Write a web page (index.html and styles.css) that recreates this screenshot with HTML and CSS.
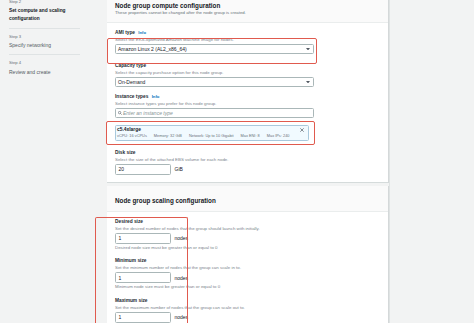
FILE: index.html
```html
<!DOCTYPE html>
<html lang="en">
<head>
<meta charset="utf-8">
<title>Node group configuration</title>
<link rel="stylesheet" href="styles.css">
</head>
<body>
<div class="page">
  <nav class="steps">
    <div class="step first">
      <div class="step-num">Step 2</div>
      <div class="step-title current">Set compute and scaling configuration</div>
    </div>
    <div class="step">
      <div class="step-num">Step 3</div>
      <div class="step-title">Specify networking</div>
    </div>
    <div class="step last">
      <div class="step-num">Step 4</div>
      <div class="step-title">Review and create</div>
    </div>
  </nav>

  <main class="main">
    <section class="card">
      <header class="card-head">
        <h2>Node group compute configuration</h2>
        <p>These properties cannot be changed after the node group is created.</p>
      </header>
      <div class="card-body first-body">
        <div class="field">
          <div class="label">AMI type <span class="info">Info</span></div>
          <div class="desc">Select the EKS-optimized Amazon Machine Image for nodes.</div>
          <div class="select"><span>Amazon Linux 2 (AL2_x86_64)</span><svg class="caret" viewBox="0 0 4 2.5"><polygon points="0,0 4,0 2,2.5"/></svg></div>
        </div>
        <div class="field f-cap">
          <div class="label">Capacity type</div>
          <div class="desc">Select the capacity purchase option for this node group.</div>
          <div class="select"><span>On-Demand</span><svg class="caret" viewBox="0 0 4 2.5"><polygon points="0,0 4,0 2,2.5"/></svg></div>
        </div>
        <div class="field f-inst">
          <div class="label">Instance types <span class="info">Info</span></div>
          <div class="desc">Select instance types you prefer for this node group.</div>
          <div class="search">
            <svg class="mag" viewBox="0 0 4 4"><circle cx="1.6" cy="1.6" r="1.2"/><line x1="2.5" y1="2.5" x2="3.7" y2="3.7"/></svg>
            <span>Enter an instance type</span>
          </div>
          <div class="chip">
            <div class="chip-main">
              <div class="chip-name">c5.4xlarge</div>
              <div class="chip-specs"><span>vCPU: 16 vCPUs</span><span>Memory: 32 GiB</span><span>Network: Up to 10 Gigabit</span><span>Max ENI: 8</span><span>Max IPs: 240</span></div>
            </div>
            <svg class="chip-x" viewBox="0 0 4 4"><line x1="0.3" y1="0.3" x2="3.7" y2="3.7"/><line x1="3.7" y1="0.3" x2="0.3" y2="3.7"/></svg>
          </div>
        </div>
        <div class="field f-disk">
          <div class="label">Disk size</div>
          <div class="desc">Select the size of the attached EBS volume for each node.</div>
          <div class="row"><div class="num-input">20</div><span class="unit">GiB</span></div>
        </div>
      </div>
    </section>

    <section class="card card2">
      <header class="card-head">
        <h2>Node group scaling configuration</h2>
      </header>
      <div class="card-body">
        <div class="field">
          <div class="label">Desired size</div>
          <div class="desc">Set the desired number of nodes that the group should launch with initially.</div>
          <div class="row"><div class="num-input">1</div><span class="unit">nodes</span></div>
          <div class="hint">Desired node size must be greater than or equal to 0</div>
        </div>
        <div class="field f-next">
          <div class="label">Minimum size</div>
          <div class="desc">Set the minimum number of nodes that the group can scale in to.</div>
          <div class="row"><div class="num-input">1</div><span class="unit">nodes</span></div>
          <div class="hint">Minimum node size must be greater than or equal to 0</div>
        </div>
        <div class="field f-next">
          <div class="label">Maximum size</div>
          <div class="desc">Set the maximum number of nodes that the group can scale out to.</div>
          <div class="row"><div class="num-input">1</div><span class="unit">nodes</span></div>
        </div>
      </div>
    </section>
  </main>

  <aside class="panel"></aside>

  <div class="mark m1"></div>
  <div class="mark m2"></div>
  <div class="mark m3"></div>
</div>
</body>
</html>
```

FILE: styles.css
```css
* { box-sizing: border-box; margin: 0; padding: 0; }
html, body { width: 474px; height: 323px; overflow: hidden; }
body {
  font-family: "Liberation Sans", Arial, sans-serif;
  background: #f2f3f3;
  color: #16191f;
}
.page {
  position: relative;
  display: grid;
  grid-template-columns: 107px 282px 85px;
  height: 323px;
  overflow: hidden;
}

/* sidebar steps */
.steps { padding-left: 9px; }
.step {
  width: 71px;
  padding: 5px 0;
  border-bottom: 1px solid #dfe3e4;
}
.step.first { margin-top: -6px; }
.step.last { border-bottom: 0; }
.step-num {
  font-size: 4.2px;
  line-height: 6px;
  color: #687078;
  margin-bottom: 1.5px;
}
.step-title {
  font-size: 5px;
  line-height: 8px;
  color: #545b64;
}
.step-title.current {
  font-weight: bold;
  font-size: 4.8px;
  color: #16191f;
}

/* main */
.main { margin-top: -9.5px; padding-right: 1px; }
.card {
  background: #fff;
  border-bottom: 1px solid #d5dbdb;
  box-shadow: -0.5px 0 0.5px rgba(0, 28, 36, 0.12), 0.5px 0 0.5px rgba(0, 28, 36, 0.12);
}
.card2 { margin-top: 3.5px; }
.card-head {
  background: #fafafa;
  border-bottom: 1px solid #eaeded;
  padding: 10px 8px 6.5px;
}
.card2 .card-head { padding-bottom: 6px; }
.card-head h2 {
  font-size: 6.3px;
  line-height: 9px;
  font-weight: bold;
}
.card-head p {
  font-size: 4.3px;
  line-height: 6px;
  color: #687078;
}
.card-body { padding: 5.5px 8px 7px; }
.first-body { padding-top: 6px; }

.label {
  font-size: 4.8px;
  font-weight: bold;
  line-height: 7px;
  color: #232a31;
}
.info {
  color: #0073bb;
  font-size: 4.2px;
  margin-left: 2px;
}
.desc {
  font-size: 4.4px;
  line-height: 7px;
  color: #7b848c;
  margin-bottom: 1px;
}
.hint {
  font-size: 4.4px;
  line-height: 6px;
  color: #7b848c;
  margin-top: 1px;
}
.f-cap { margin-top: 8px; }
.f-inst { margin-top: 5.5px; }
.f-disk { margin-top: 8px; }
.f-next { margin-top: 6.5px; }

.select {
  width: 199px;
  height: 10px;
  border: 1px solid #aab7b8;
  border-radius: 1.5px;
  display: flex;
  align-items: center;
  justify-content: space-between;
  padding: 0 3.5px 0 2px;
  font-size: 5px;
  color: #16191f;
}
.caret { width: 4px; height: 2.5px; fill: #545b64; }

.search {
  width: 199px;
  height: 10px;
  border: 1px solid #aab7b8;
  border-radius: 1.5px;
  display: flex;
  align-items: center;
  gap: 1.5px;
  padding-left: 1.5px;
  font-size: 5px;
  font-style: italic;
  color: #879596;
}
.mag { width: 4px; height: 4px; fill: none; stroke: #545b64; stroke-width: 0.6; }

.chip {
  margin-top: 7px;
  width: 194px;
  background: #f1faff;
  border: 1px solid #a9c9dd;
  border-radius: 1.5px;
  padding: 1px 4px 1px 1px;
  display: flex;
  justify-content: space-between;
  align-items: flex-start;
}
.chip-name {
  font-size: 4.9px;
  font-weight: bold;
  line-height: 6px;
}
.chip-specs {
  display: flex;
  gap: 7px;
  font-size: 3.9px;
  line-height: 6px;
  color: #687078;
  white-space: nowrap;
}
.chip-x { width: 4px; height: 4px; margin-top: 1px; stroke: #545b64; stroke-width: 0.7; }

.row { display: flex; align-items: center; }
.num-input {
  width: 56px;
  height: 11px;
  border: 1px solid #aab7b8;
  border-radius: 1.5px;
  padding-left: 2.5px;
  display: flex;
  align-items: center;
  font-size: 5px;
}
.unit { font-size: 5px; margin-left: 3.5px; color: #16191f; }

/* right panel */
.panel {
  border-left: 1px solid #dfe3e3;
  background: #f2f3f3;
}

/* red annotation boxes */
.mark {
  position: absolute;
  border: 1.2px solid #e05a4e;
  border-radius: 2px;
}
.m1 { left: 107px; top: 38px; width: 210px; height: 26px; }
.m2 { left: 106px; top: 121px; width: 209px; height: 24px; }
.m3 { left: 95px; top: 217px; width: 93px; height: 106px; border-bottom-width: 0; border-bottom-left-radius: 0; border-bottom-right-radius: 0; }
```
